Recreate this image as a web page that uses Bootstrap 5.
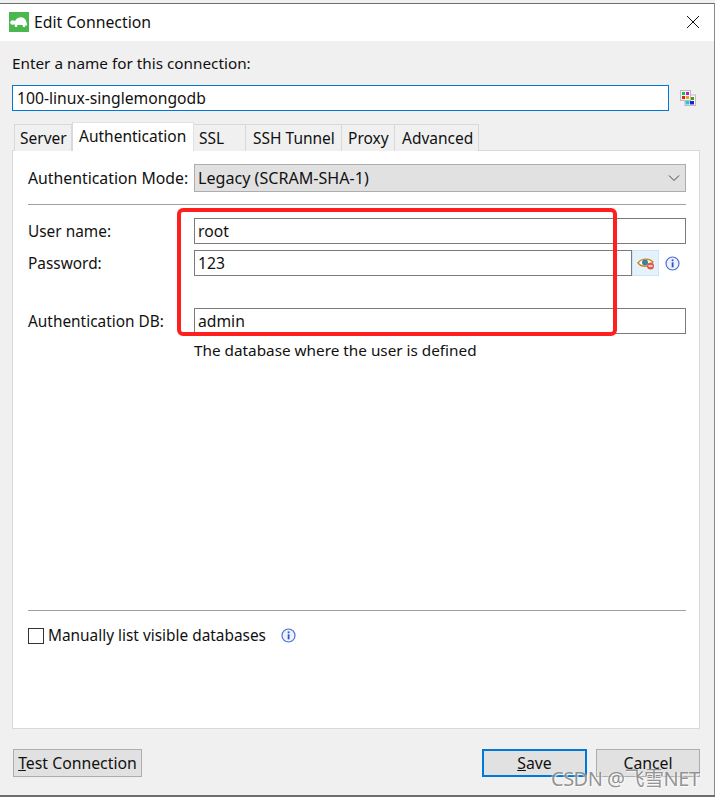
<!DOCTYPE html>
<html>
  <head>
    <title>Edit Connection</title>
    <link
      rel="stylesheet"
      href="https://cdn.jsdelivr.net/npm/bootstrap@5.3.0/dist/css/bootstrap.min.css"
    />
    <style>
      html, body { height: 797px; overflow: hidden; }
      body { background: #f0f0f0; color: #111; font-family: "Noto Sans", "Liberation Sans", sans-serif; font-size: 15.5px; line-height: 20px; }
      .win { position: relative; height: 797px; padding-top: 3px; border-bottom: 2px solid #6d6d6d; }
      .win-top { height: 1px; background: #6d6d6d; }
      .win-edge { position: absolute; top: 3px; right: 0; bottom: 0; width: 1px; background: #8a8a8a; }
      .title-bar { height: 37px; background: #fff; padding: 0 0 2px 9px; }
      .app-logo { width: 20px; height: 20px; }
      .title-text { margin-left: 5px; font-size: 15.8px; }
      .win-close { width: 14px; height: 14px; margin-right: 15px; }
      .body-wrap { padding: 12px 15px 0 12px; }
      .name-label { height: 20px; margin-bottom: 12px; font-size: 15.3px; }
      .name-input { width: 657px; height: 26px; border: 1.5px solid #0078d7; border-radius: 0; padding: 0 3px 0 4px; font-size: 15.7px; color: #111; background: #fff; box-shadow: none; }
      .palette { width: 16px; height: 16px; margin-left: 11px; }
      .tab-strip { margin-top: 12px; margin-left: 2px; height: 27px; border: 0; flex-wrap: nowrap; position: relative; z-index: 2; }
      .tab-strip .nav-link { height: 27px; margin: 1px 0 0; padding: 3px 0 0 5px; border: 1px solid #d9d9d9; border-left: 0; border-bottom: 0; border-radius: 0; background: #f0f0f0; color: #111; }
      .tab-strip .nav-item:first-child .nav-link { border-left: 1px solid #d9d9d9; }
      .tab-strip .nav-link.active { height: 29px; margin-top: -1px; padding: 3px 0 0 6px; background: #fff; color: #111; border-left: 1px solid #d9d9d9; }
      .tw-server { width: 58px; }
      .tw-auth { width: 122px; }
      .tw-ssl { width: 52px; }
      .tab-strip .tw-ssh { width: 96px; padding-left: 7px; }
      .tab-strip .tw-proxy { width: 53px; padding-left: 6px; }
      .tab-strip .tw-adv { width: 84px; padding-left: 7px; }
      .tab-panel { height: 579px; background: #fff; border: 1px solid #d9d9d9; padding: 13px 12px 0 15px; }
      .field-label { width: 166px; flex: none; font-size: 15.4px; padding-top: 2px; }
      .mode-label { font-size: 15.8px; padding-top: 0; }
      .mode-select { width: 492px; height: 28px; background: #e1e1e1; border: 1.5px solid #adadad; padding-left: 3px; font-size: 16.1px; }
      .chev { width: 12px; height: 8px; margin-right: 5px; }
      .rule-line { height: 1px; background: #a0a0a0; width: 658px; }
      .rule-a { margin-top: 12px; margin-bottom: 13px; }
      .text-box { height: 26px; border: 1px solid #7a7a7a; border-radius: 0; padding: 0 3px; font-size: 15.7px; color: #111; background: #fff; box-shadow: none; }
      .w-long { width: 492px; }
      .w-short { width: 438px; }
      .row-pass { margin-top: 6px; }
      .row-db { margin-top: 32px; }
      .eye-btn { width: 27px; height: 26px; background: #e5f1fb; border: 1px solid #cce4f7; border-radius: 0; padding: 0; }
      .eye-icon { width: 18px; height: 14px; }
      .info-icon { width: 15px; height: 15px; }
      .info-gap { margin-left: 6px; }
      .hint-text { margin-left: 166px; margin-top: 6px; font-size: 15.3px; }
      .rule-b { margin-top: 250px; margin-bottom: 14px; }
      .check-box.form-check-input { width: 16px; height: 16px; border: 1px solid #333; background: #fff; margin: 0 4px 0 0; border-radius: 0; flex: none; }
      .check-text { font-size: 15.4px; padding-top: 1px; }
      .info-gap2 { margin-left: 15px; }
      .foot-row { margin-top: 20px; width: 688px; padding-left: 1px; }
      .dlg-btn { height: 28px; border: 1px solid #adadad; border-radius: 0; background: #e1e1e1; color: #111; font-size: 15.8px; line-height: 20px; padding: 0; }
      .dlg-btn:hover { background: #e1e1e1; color: #111; border-color: #adadad; }
      .btn-test { width: 129px; }
      .btn-save { width: 105px; border: 2px solid #0078d7; }
      .btn-save:hover { border-color: #0078d7; }
      .btn-cancel { width: 104px; margin-left: 9px; }
      .red-mark { position: absolute; left: 177px; top: 208px; width: 440px; height: 128px; border: 4px solid #ff1f1f; border-radius: 6px; pointer-events: none; }
      .stamp { position: absolute; left: 551px; top: 766px; font-size: 20px; line-height: 26px; color: rgba(120,120,120,.8); text-shadow: 1px 1px 1px rgba(255,255,255,.8), -1px 0 1px rgba(255,255,255,.5); font-family: "Noto Sans", "Noto Sans CJK SC", sans-serif; white-space: nowrap; letter-spacing: -.5px; }
    </style>
  </head>

  <body>
    <div class="win">
      <div class="win-top"></div>
      <div class="title-bar d-flex align-items-center">
        <svg class="app-logo" viewBox="0 0 20 20">
          <rect width="20" height="20" fill="#4bb84f" />
          <ellipse cx="3.800" cy="10.500" rx="2.600" ry="2.200" fill="#fff" />
          <path d="M5 12c.5-4 3.500-6.800 7-6.800s5.500 3 6.200 7.800c-.4.600-1.200.500-1.600.300l-.6 1.600h-2l-.4-1.900H8.500L8 15H6l-.3-2.500z" fill="#fff" />
        </svg>
        <span class="title-text">Edit Connection</span>
        <svg class="win-close ms-auto" viewBox="0 0 14 14">
          <path d="M1 1l12 12M13 1L1 13" stroke="#111" stroke-width="1" fill="none" />
        </svg>
      </div>

      <div class="body-wrap">
        <div class="name-label">Enter a name for this connection:</div>
        <div class="d-flex align-items-center">
          <input type="text" class="form-control name-input" value="100-linux-singlemongodb" />
          <svg class="palette" viewBox="0 0 16 16">
            <rect x="5" y="5" width="10.500" height="10.500" fill="#fff" stroke="#bbb" />
            <rect x="5.500" y="11" width="4" height="3.500" fill="#2bc4e8" />
            <rect x="10" y="11" width="4" height="3.500" fill="#2222cc" />
            <rect x="11" y="7" width="3" height="3" fill="#4a9a10" />
            <rect x=".5" y=".5" width="10" height="10" fill="#f4f4f4" stroke="#bbb" />
            <rect x="2" y="2" width="3" height="3" fill="#18c24a" />
            <rect x="6" y="2" width="3" height="3" fill="#c018e0" />
            <rect x="2" y="6" width="3" height="3" fill="#d8280c" />
            <rect x="6" y="6" width="3" height="3" fill="#f4a010" />
          </svg>
        </div>

        <ul class="nav nav-tabs tab-strip">
          <li class="nav-item"><a class="nav-link tw-server">Server</a></li>
          <li class="nav-item"><a class="nav-link tw-auth active">Authentication</a></li>
          <li class="nav-item"><a class="nav-link tw-ssl">SSL</a></li>
          <li class="nav-item"><a class="nav-link tw-ssh">SSH Tunnel</a></li>
          <li class="nav-item"><a class="nav-link tw-proxy">Proxy</a></li>
          <li class="nav-item"><a class="nav-link tw-adv">Advanced</a></li>
        </ul>

        <div class="tab-panel">
          <div class="d-flex align-items-center">
            <span class="field-label mode-label">Authentication Mode:</span>
            <div class="mode-select d-flex align-items-center justify-content-between">
              <span>Legacy (SCRAM-SHA-1)</span>
              <svg class="chev" viewBox="0 0 12 8"><path d="M1 1.500l5 5 5-5" stroke="#444" fill="none" /></svg>
            </div>
          </div>
          <div class="rule-line rule-a"></div>

          <div class="d-flex align-items-center">
            <span class="field-label">User name:</span>
            <input type="text" class="form-control text-box w-long" value="root" />
          </div>
          <div class="d-flex align-items-center row-pass">
            <span class="field-label">Password:</span>
            <input type="text" class="form-control text-box w-short" value="123" />
            <button type="button" class="btn eye-btn d-flex align-items-center justify-content-center">
              <svg class="eye-icon" viewBox="0 0 18 14">
                <path d="M1 7c3-4.500 11-5.500 15-1-3 5-11 6-15 1z" fill="#fff" stroke="#c98a1e" stroke-width="1.400" />
                <circle cx="8" cy="6.500" r="3" fill="#3f7f9c" />
                <circle cx="13.500" cy="10" r="3.500" fill="#e2574c" />
                <rect x="11.500" y="9.300" width="4" height="1.400" fill="#fff" />
              </svg>
            </button>
            <svg class="info-icon info-gap" viewBox="0 0 15 15">
              <circle cx="7.500" cy="7.500" r="6.500" fill="#eef2fd" stroke="#4a6fd8" stroke-width="1.200" />
              <rect x="6.700" y="6.300" width="1.800" height="5" fill="#2f52c0" />
              <rect x="6.700" y="3.400" width="1.800" height="1.800" fill="#2f52c0" />
            </svg>
          </div>
          <div class="d-flex align-items-center row-db">
            <span class="field-label">Authentication DB:</span>
            <input type="text" class="form-control text-box w-long" value="admin" />
          </div>
          <div class="hint-text">The database where the user is defined</div>

          <div class="rule-line rule-b"></div>
          <div class="d-flex align-items-center">
            <input type="checkbox" class="check-box form-check-input" />
            <span class="check-text">Manually list visible databases</span>
            <svg class="info-icon info-gap2" viewBox="0 0 15 15">
              <circle cx="7.500" cy="7.500" r="6.500" fill="#eef2fd" stroke="#4a6fd8" stroke-width="1.200" />
              <rect x="6.700" y="6.300" width="1.800" height="5" fill="#2f52c0" />
              <rect x="6.700" y="3.400" width="1.800" height="1.800" fill="#2f52c0" />
            </svg>
          </div>
        </div>

        <div class="d-flex foot-row">
          <button type="button" class="btn dlg-btn btn-test"><u>T</u>est Connection</button>
          <button type="button" class="btn dlg-btn btn-save ms-auto"><u>S</u>ave</button>
          <button type="button" class="btn dlg-btn btn-cancel">Cancel</button>
        </div>
      </div>

      <div class="win-edge"></div>
      <div class="red-mark"></div>
      <div class="stamp">CSDN @飞雪NET</div>
    </div>

    <script src="https://cdn.jsdelivr.net/npm/bootstrap@5.3.0/dist/js/bootstrap.bundle.min.js"></script>
  </body>
</html>
